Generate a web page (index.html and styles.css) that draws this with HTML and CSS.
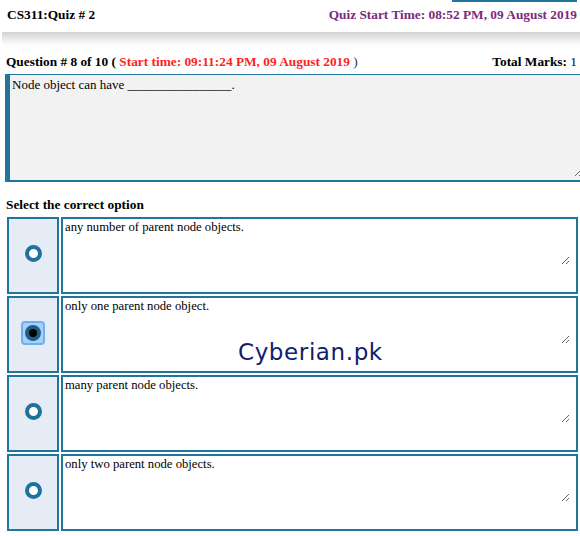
FILE: index.html
```html
<!DOCTYPE html>
<html>
<head>
<meta charset="utf-8">
<link rel="stylesheet" href="styles.css">
</head>
<body>
<header class="top">
  <div class="quiz-name">CS311:Quiz # 2</div>
  <div class="quiz-right">
    <div class="tab-bar"></div>
    <div class="quiz-time">Quiz Start Time: 08:52 PM, 09 August 2019</div>
  </div>
</header>
<div class="shade"></div>
<div class="qline">
  <div class="qtitle">Question # 8 of 10 ( <span class="red">Start time: 09:11:24 PM, 09 August 2019</span> <span class="paren">)</span></div>
  <div class="marks">Total Marks: <span class="normal">1</span></div>
</div>
<div class="question-box">
  <textarea class="question" readonly>Node object can have ________________.</textarea>
</div>
<div class="select">Select the correct option</div>
<div class="options">
  <div class="opt">
    <div class="pick"><span class="radio"></span></div>
    <div class="answer-cell"><textarea class="answer" readonly>any number of parent node objects.</textarea></div>
  </div>
  <div class="opt">
    <div class="pick"><span class="focus"><span class="radio checked"></span></span></div>
    <div class="answer-cell"><textarea class="answer" readonly>only one parent node object.</textarea></div>
  </div>
  <div class="opt">
    <div class="pick"><span class="radio"></span></div>
    <div class="answer-cell"><textarea class="answer" readonly>many parent node objects.</textarea></div>
  </div>
  <div class="opt">
    <div class="pick"><span class="radio"></span></div>
    <div class="answer-cell"><textarea class="answer" readonly>only two parent node objects.</textarea></div>
  </div>
</div>
<div class="watermark">Cyberian.pk</div>
</body>
</html>
```
FILE: styles.css
```css
html, body {
  margin: 0;
  padding: 0;
  overflow: hidden;
  background: #fff;
}
body {
  font-family: "Liberation Serif", "Times New Roman", serif;
  color: #000;
  position: relative;
  width: 580px;
  height: 536px;
}
.top {
  display: flex;
  justify-content: space-between;
  height: 32px;
  padding: 0 3px 0 7px;
}
.quiz-name {
  font-weight: bold;
  font-size: 13.33px;
  padding-top: 7px;
}
.quiz-right {
  display: flex;
  flex-direction: column;
  align-items: flex-end;
}
.tab-bar {
  width: 125px;
  height: 2px;
  background: #21759b;
}
.quiz-time {
  font-weight: bold;
  font-size: 13.33px;
  color: #7b2a7d;
  padding-top: 5px;
}
.shade {
  margin-left: 2px;
  height: 14px;
  background: linear-gradient(#d2d2d2, #f4f4f4 70%, #fff);
}
.qline {
  display: flex;
  justify-content: space-between;
  font-size: 13.33px;
  padding: 8px 3px 0 6px;
  height: 28px;
  box-sizing: border-box;
}
.qtitle, .marks {
  font-weight: bold;
}
.red {
  color: #ff1f1f;
}
.paren {
  color: #1a3a6a;
  font-weight: normal;
}
.normal {
  font-weight: normal;
}
.question-box {
  margin-left: 5px;
  width: 590px;
  height: 108px;
  box-sizing: border-box;
  border-top: 1px solid #21759b;
  border-left: 5px solid #21759b;
  border-bottom: 2px solid #21759b;
  background: #f2f2f2;
}
.question {
  display: block;
  width: 573px;
  height: 102px;
  box-sizing: border-box;
  border: none;
  background: transparent;
  font-family: "Liberation Serif", "Times New Roman", serif;
  font-size: 13px;
  padding: 2px 2px;
  resize: vertical;
  outline: none;
  color: #000;
}
.select {
  font-weight: bold;
  font-size: 13.33px;
  padding: 15px 0 0 6px;
  height: 35px;
  box-sizing: border-box;
}
.options {
  display: flex;
  flex-direction: column;
  gap: 2px;
  padding-left: 7px;
}
.opt {
  display: flex;
  gap: 2px;
  height: 77px;
}
.pick {
  width: 52px;
  box-sizing: border-box;
  border: 2px solid #21759b;
  background: #e5ecf6;
  display: flex;
  align-items: center;
  justify-content: center;
  padding-bottom: 4px;
}
.answer-cell {
  width: 517px;
  height: 77px;
  box-sizing: border-box;
  border: 2px solid #21759b;
  background: #fff;
  padding: 0 0 0 1px;
}
.answer {
  display: block;
  width: 506px;
  height: 46px;
  box-sizing: border-box;
  border: none;
  background: transparent;
  font-family: "Liberation Serif", "Times New Roman", serif;
  font-size: 12.7px;
  padding: 1px 1px;
  resize: vertical;
  outline: none;
  color: #000;
}
.radio {
  display: block;
  width: 17px;
  height: 17px;
  box-sizing: border-box;
  border-radius: 50%;
  border: 4px solid #1f729b;
  background: #fff;
}
.radio.checked {
  width: 16px;
  height: 16px;
  background: #000;
  border-color: #1d5f86;
}
.focus {
  display: flex;
  align-items: center;
  justify-content: center;
  width: 24px;
  height: 24px;
  box-sizing: border-box;
  border-radius: 4px;
  border: 2px solid #6db1f2;
  background: #a9d1f8;
}
.watermark {
  position: absolute;
  left: 238px;
  top: 339px;
  font-family: "DejaVu Sans", Verdana, sans-serif;
  font-size: 23px;
  color: #0f216e;
  letter-spacing: 0.6px;
}
```
